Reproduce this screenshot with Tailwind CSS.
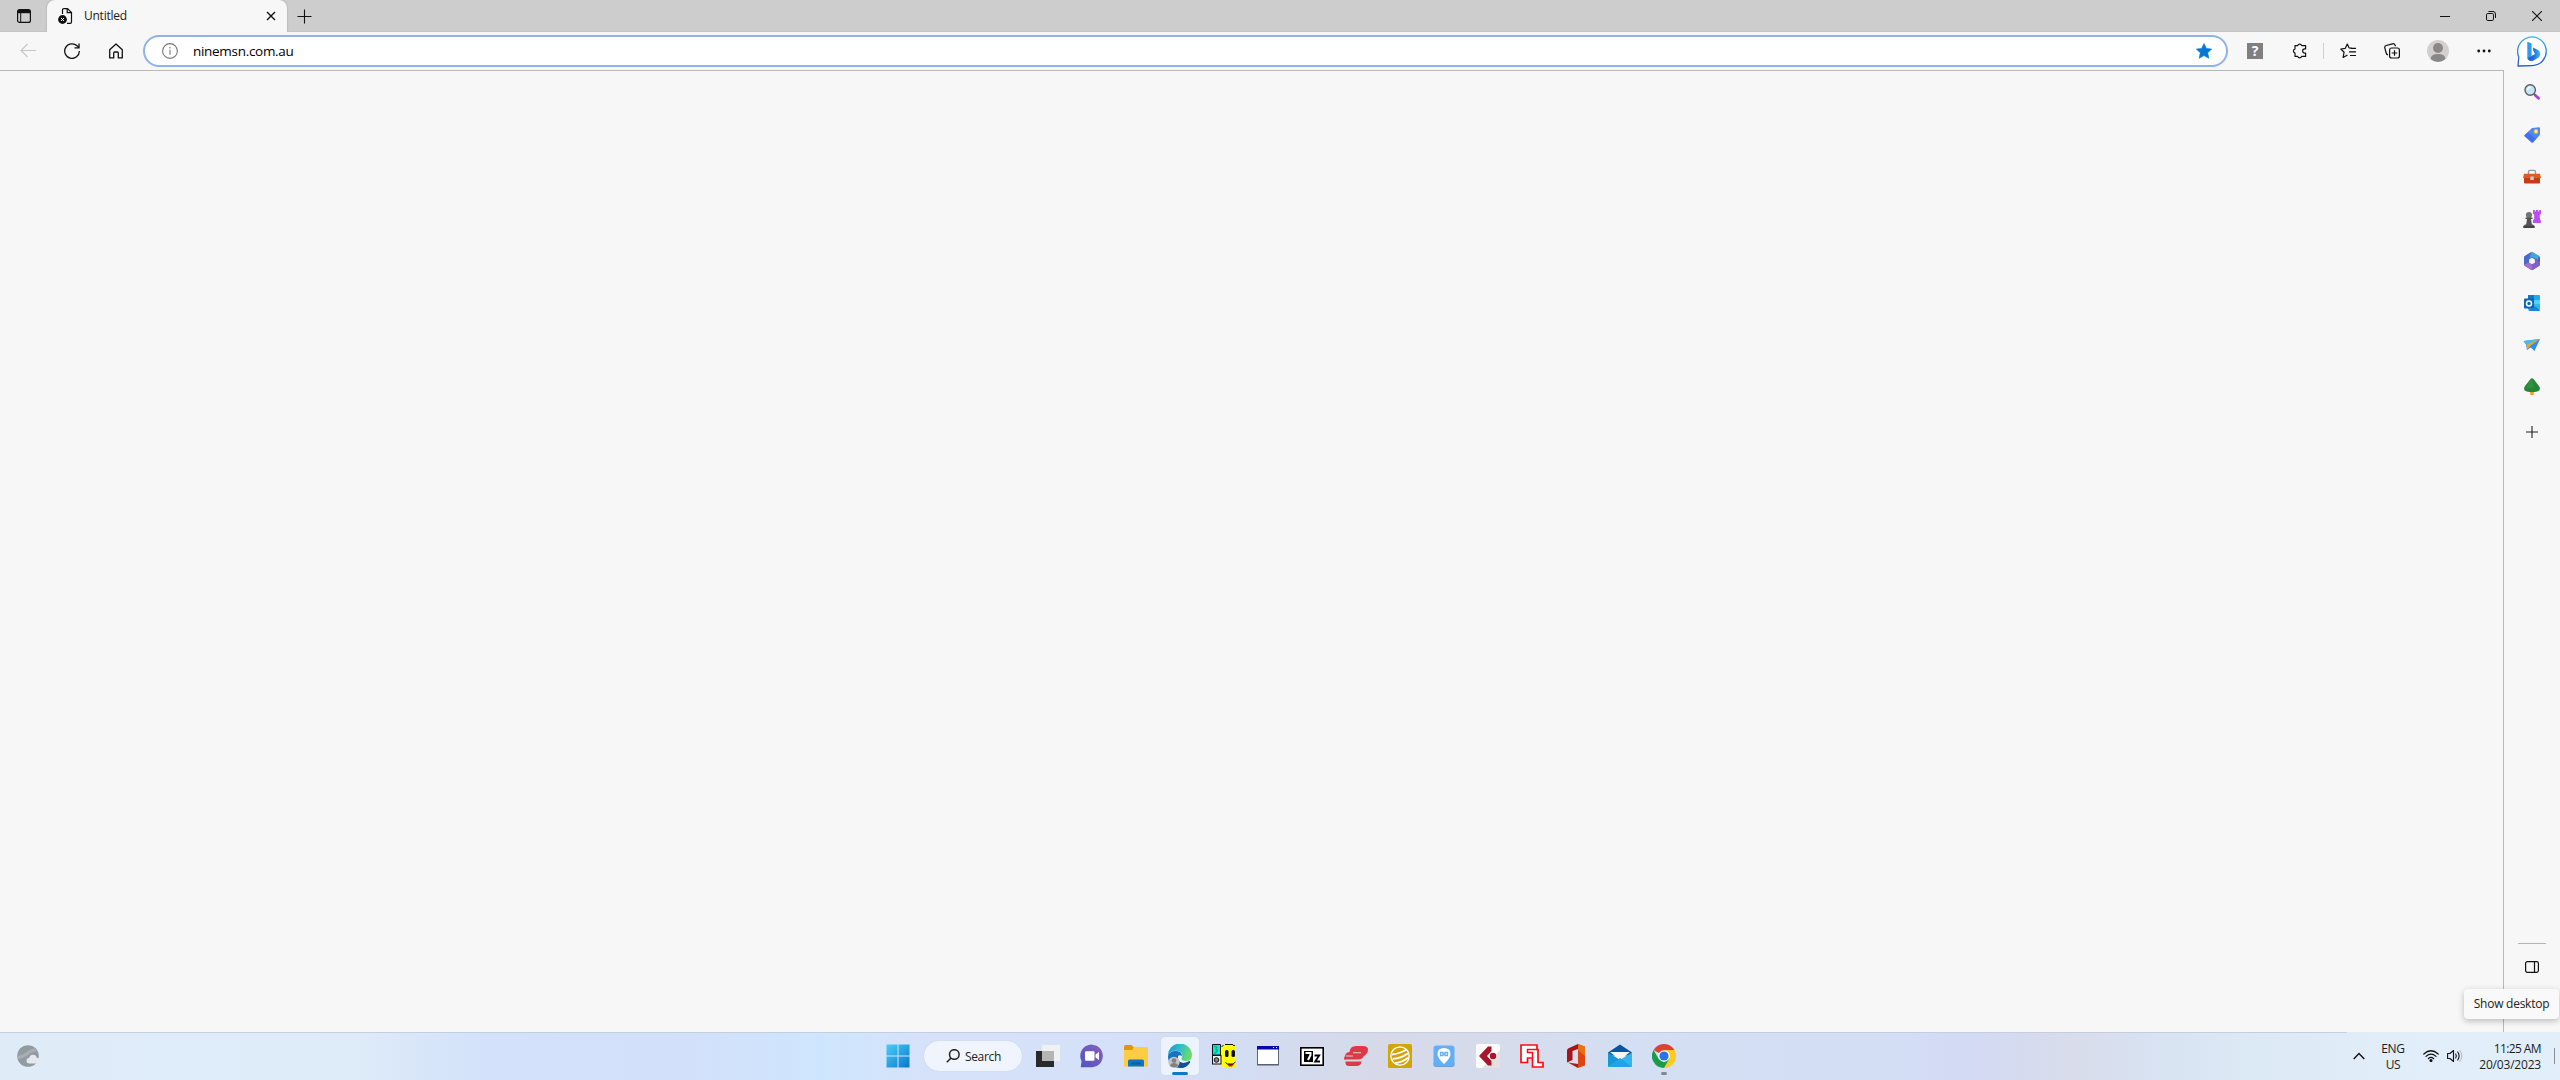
<!DOCTYPE html>
<html lang="en">
<head>
    <meta charset="UTF-8">
    <meta name="viewport" content="width=device-width, initial-scale=1.0">
    <script src="https://cdn.jsdelivr.net/npm/@tailwindcss/browser@4"></script>
    <title>Untitled</title>
</head>
<body class="h-screen flex flex-col overflow-hidden bg-[#f7f7f7] text-[#1a1a1a] font-['Open_Sans','Noto_Sans',sans-serif]">

    <!-- tab strip -->
    <div class="h-8 shrink-0 flex bg-[#cdcdcd] shadow-[inset_0_-1px_0_#c4c4c4]">
        <button class="w-[47px] flex items-center pl-[17px]">
            <svg class="size-[14px]" viewBox="0 0 14 14"><rect x=".6" y=".6" width="12.8" height="12.8" rx="2" fill="none" stroke="#111" stroke-width="1.2"/><path d="M1 1h12v3.2H1z" fill="#111"/><path d="M3.7 4v9" stroke="#111" stroke-width="1"/></svg>
        </button>
        <div class="w-[240px] h-8 flex items-center bg-[#f7f7f7] rounded-t-lg pl-[11px] pr-[11px] relative z-10 shadow-[0_0_2px_#999] [clip-path:inset(0_-3px_0_-3px)]">
            <svg class="w-[15px] h-4" viewBox="0 0 15 16"><path d="M4.5 6V2q0-1.400 1.400-1.400H9.500l4 4V14q0 1.400-1.400 1.400H9" fill="none" stroke="#111" stroke-width="1.200"/><path d="M9.200.7v4h4" fill="none" stroke="#111" stroke-width="1.200"/><circle cx="4.500" cy="11.500" r="4.400" fill="#111"/><path d="M3 10l3 3M6 10l-3 3" stroke="#fff" stroke-width="1"/></svg>
            <span class="ml-[11px] text-xs tracking-[-0.25px]">Untitled</span>
            <svg class="ml-auto size-[10px]" viewBox="0 0 10 10"><path d="M1 1l8 8M9 1L1 9" stroke="#111" stroke-width="1.4"/></svg>
        </div>
        <button class="ml-[10px]"><svg class="size-[15px]" viewBox="0 0 15 15"><path d="M7.500.5v14M.5 7.500h14" stroke="#111" stroke-width="1.1"/></svg></button>
        <div class="ml-auto flex">
            <button class="w-[46px] flex items-center justify-center"><svg class="size-[10px]" viewBox="0 0 10 10"><path d="M0 5.500h10" stroke="#111"/></svg></button>
            <button class="w-[46px] flex items-center justify-center"><svg class="size-[10px]" viewBox="0 0 10 10" fill="none" stroke="#111"><rect x=".5" y="2.500" width="7" height="7" rx="1.300"/><path d="M2.500.5h4.500q2.500 0 2.500 2.500V7"/></svg></button>
            <button class="w-[46px] flex items-center justify-center"><svg class="size-[10px]" viewBox="0 0 10 10"><path d="M0 0l10 10M10 0L0 10" stroke="#111" stroke-width="1.1"/></svg></button>
        </div>
    </div>

    <!-- toolbar -->
    <div class="h-[38px] shrink-0 flex items-center">
        <svg class="ml-5 size-4 shrink-0" viewBox="0 0 16 16" fill="none" stroke="#c6c6c6" stroke-width="1.1"><path d="M16 7.500H1M7.500 1L1 7.500 7.500 14"/></svg>
        <svg class="ml-7 size-4 shrink-0" viewBox="0 0 16 16" fill="none" stroke="#111" stroke-width="1.3"><path d="M15.300 8A7.300 7.300 0 1 1 13 2.800l2 1.800"/><path d="M15 .5v4.300h-4.500"/></svg>
        <svg class="ml-7 size-4 shrink-0" viewBox="0 0 16 16" fill="none" stroke="#111" stroke-width="1.3" stroke-linejoin="round"><path d="M1.700 6.700L8 1l6.300 5.700v8.200h-4V10q0-1-1-1H6.700q-1 0-1 1v4.900h-4z"/></svg>
        <div class="ml-[19px] w-[2085px] h-8 shrink-0 flex items-center rounded-full border-2 border-[#8fb2ec] bg-white pl-[17px] pr-[14px]">
            <svg class="size-4" viewBox="0 0 16 16" fill="none" stroke="#767676" stroke-width="1.1"><circle cx="8" cy="8" r="7.4"/><path d="M8 6.800v5M8 4v1.400"/></svg>
            <span class="ml-[15px] pt-px text-[13.5px] leading-none text-black tracking-[-0.3px]">ninemsn.com.au</span>
            <svg class="ml-auto size-4" viewBox="0 0 16 16"><path d="M8 .5l2.300 4.900 5.400.7-4 3.700 1.100 5.500L8 12.600l-4.800 2.700 1.100-5.500-4-3.700 5.400-.7z" fill="#0078d4" stroke="#0078d4" stroke-width=".6" stroke-linejoin="round"/></svg>
        </div>
        <div class="ml-[19px] size-4 shrink-0 bg-[#808080] text-white text-[14px] leading-4 font-bold text-center">?</div>
        <svg class="ml-[29px] size-4 shrink-0" viewBox="0 0 16 16" fill="none" stroke="#111" stroke-width="1.2" stroke-linejoin="round"><path d="M3 2.600h2.700a2.100 2.100 0 0 1 4 0h3.900v3.300h-.9a2.100 2.100 0 0 0 0 4.200h.9v3.300H9.700a2.100 2.100 0 0 1-4 0H3v-3.300a2.200 2.200 0 0 1 0-4.200z"/></svg>
        <div class="ml-[15px] w-px h-4 bg-[#cfcfcf]"></div>
        <svg class="ml-4 size-4 shrink-0" viewBox="0 0 16 16" fill="none" stroke="#111" stroke-width="1.2" stroke-linejoin="round"><path d="M12 5.200l-3-.4L7.300 1 5.300 5.300.8 6l3.300 3.200-1 5.300L7.500 12M10.500 5.300H16M9 8.900h7M10 12.500h6"/></svg>
        <svg class="ml-7 size-4 shrink-0" viewBox="0 0 16 16" fill="none" stroke="#111" stroke-width="1.2"><rect x="5.600" y="5" width="9.800" height="10" rx="2"/><path d="M10.500 7.300v5.500M7.700 10h5.500M4 12Q2.500 11.500 2 9.500L.8 4.800Q.4 3 2.200 2.500L8.500.8q1.800-.4 2.500 1.200l.5 1.300"/></svg>
        <svg class="ml-[27px] size-[22px] shrink-0" viewBox="0 0 22 22"><circle cx="11" cy="11" r="11" fill="#d2d0ce"/><circle cx="11" cy="8" r="5" fill="#888"/><path d="M3.500 19q.5-5 7.500-5t7.500 5q-7.500 6-15 0z" fill="#888"/></svg>
        <svg class="ml-7 w-[14px] h-4 shrink-0" viewBox="0 0 14 16" fill="#111"><circle cx="1.700" cy="8" r="1.400"/><circle cx="7" cy="8" r="1.400"/><circle cx="12.300" cy="8" r="1.400"/></svg>
        <svg class="ml-[26px] size-[31px] shrink-0" viewBox="0 0 31 31">
            <defs><linearGradient id="bo" x1="0" y1="0" x2="0" y2="1"><stop stop-color="#36b5f0"/><stop offset="1" stop-color="#2855cf"/></linearGradient><linearGradient id="bb" x1="0" y1="0" x2="1" y2="0"><stop stop-color="#2460d8"/><stop offset=".5" stop-color="#2b6ae0"/><stop offset="1" stop-color="#35c5ee"/></linearGradient></defs>
            <path d="M1 30l.8-9A14.300 14.300 0 1 1 15.300 29.600Z" fill="#fff" stroke="url(#bo)" stroke-width="1.3" stroke-linejoin="round"/>
            <path d="M10.300 5.800l3.500 1.200q.8.300.8 1.200v11.500l-3 4.300q-1.300-.8-1.300-2.300z" fill="#2b9cf2"/><path d="M16 11.500l5 2.600q2.500 1.300 2.300 4.200-.2 1.800-1.700 3.200l-5.500 3.200q-2.200 1-4.300-.5l-1.300-1.900 7.500-4.300-1.800-3.400z" fill="url(#bb)"/>
        </svg>
    </div>

    <!-- page and sidebar -->
    <div class="flex-1 min-h-0 flex relative">
        <main class="flex-1 border-t border-r border-[#b8b8b8]"></main>
        <aside class="w-14 flex flex-col items-center pt-[14px] pb-[59px] gap-[26px] shrink-0">
            <svg class="size-4 shrink-0" viewBox="0 0 16 16"><path d="M11.500 11.500l3 2.800" stroke="#b03be0" stroke-width="2.800" stroke-linecap="round"/><path d="M9.500 9.500l2 2" stroke="#666" stroke-width="2"/><circle cx="6.200" cy="6" r="5.200" fill="#c5e6fa" stroke="#5c5c5c" stroke-width="1.4"/><path d="M3.500 5.500q1-2.500 3-2.500" fill="none" stroke="#fff" stroke-width="1.3"/></svg>
            <svg class="mt-px size-4 shrink-0" viewBox="0 0 16 16"><path d="M8 1l7-.8q1 0 1 1V7q0 1-.8 1.700l-6 6.600q-.8.8-1.600 0L.7 9.500q-.9-.8 0-1.600z" fill="#4f86f8"/><path d="M.6 9l6.800 6.500q.8.600 1.700-.3l3-3.200L4 5.500.8 7.800z" fill="#4165e0" opacity=".7"/><circle cx="12" cy="4.500" r="1.800" fill="#fff" stroke="#f5bd25" stroke-width="1.300"/></svg>
            <svg class="w-[18px] h-4 shrink-0" viewBox="0 0 18 16"><path d="M5.500 5V3q0-1.600 1.500-1.600h4q1.500 0 1.500 1.600v2" fill="none" stroke="#999" stroke-width="1.400"/><rect x="1" y="8" width="16" height="6.500" rx=".8" fill="#c73d13"/><path d="M1 4.800h16l1 4.200H0z" fill="#e25a23"/><rect x="7.300" y="7.500" width="3.500" height="3.600" rx=".6" fill="#ccc"/></svg>
            <svg class="w-[18px] h-[18px] -my-px shrink-0" viewBox="0 0 18 18"><path d="M10 0h1.800v1.500h1V0h2.400v1.500h1V0H18v3.500L16.800 5v3.500l1 2.200V13H10v-2.500l1.200-2V5L10 3.500z" fill="#bb4cf8"/><circle cx="6" cy="5" r="3.100" fill="#747474"/><path d="M2.500 7.500h7V9H8l.8 5 2.700 1.800V18H.5v-2.200L3.200 14 4 9H2.500z" fill="#555"/><path d="M.5 16h11v2H.5z" fill="#444"/></svg>
            <svg class="w-4 h-[18px] -my-px shrink-0" viewBox="0 0 16 18"><path d="M8 .2L15 4q1 .5 1 2v6q0 1.500-1 2l-6 3.700q-1 .5-2 0L1 14q-1-.5-1-2V6q0-1.500 1-2L6.500.5z" fill="#4a5cb8"/><path d="M7 .3q1-.5 2 0L15 4l-1 4-6-3-3 2.500z" fill="#46a5d8"/><path d="M7 .3L5 7.500v3L.3 13Q0 12.500 0 11.500V6q0-1.300 1-2z" fill="#4a6cc8"/><path d="M.2 12.500L5 10.500l3 2.500v5q-.5 0-1-.3L1 14q-.7-.5-.8-1.500z" fill="#a76fd4"/><path d="M8 13l3-2.500V7l5 3v2q0 1.500-1 2l-6 3.700q-.5.3-1 .3z" fill="#7e62c8"/><path d="M8 5.800l2.900 1.600v3.300L8 12.300l-2.900-1.600V7.400z" fill="#f7f7f7"/></svg>
            <svg class="w-4 h-4 shrink-0" viewBox="0 0 16 16"><rect x="4" y="0" width="12" height="15" rx="1" fill="#29a7e8"/><path d="M4 0h6v5H4z" fill="#0f78cc"/><path d="M10 5h6v5h-6z" fill="#50d2fa"/><path d="M4 16l12-7v6q0 1-1 1z" fill="#1586d8"/><path d="M9 9l7 6.500V9z" fill="#35b8f1"/><rect x="0" y="3.500" width="10" height="10" rx="1" fill="#0b66bb"/><circle cx="5" cy="8.500" r="2.500" fill="none" stroke="#fff" stroke-width="1.500"/></svg>
            <svg class="w-[18px] h-4 shrink-0" viewBox="0 0 18 16"><path d="M.5 4L17 2l-5.500 12-3.700-3.500L4 13 3 7.500z" fill="#2e8fed"/><path d="M.5 4L17 2 3.500 8z" fill="#4eb8ee"/><path d="M17 2L3.500 7.500 4.500 13 7 9z" fill="#e9a728"/></svg>
            <svg class="w-4 h-[18px] -my-px shrink-0" viewBox="0 0 16 18"><path d="M6.200 12h3.600v4.500q-1.800 1.500-3.600 0z" fill="#ef9e1d"/><path d="M8 .2q1.300 0 2.500 2l4.800 6.300q2 4-2 5Q8 14.500 2.700 13.500q-4-1-2-5l4.800-6.300Q6.700.2 8 .2z" fill="#258637"/><path d="M8 .5q-2 1.500-3.500 5L2 10q5 1 8-1z" fill="#39994a" opacity=".6"/></svg>
            <svg class="mt-[5px] size-3 shrink-0" viewBox="0 0 12 12"><path d="M6 0v12M0 6h12" stroke="#222" stroke-width="1.1"/></svg>
            <div class="mt-auto w-7 h-px bg-[#b5b5b5] shrink-0 -mb-[9px]"></div>
            <svg class="w-[14px] h-3 shrink-0" viewBox="0 0 14 12" fill="none" stroke="#111" stroke-width="1.2"><rect x=".6" y=".6" width="12.800" height="10.800" rx="1.800"/><path d="M9.500 .6v10.800"/></svg>
        </aside>
        <div class="absolute right-px bottom-[13px] w-[95px] h-[30px] flex items-center justify-center rounded bg-[#f9f9f9] shadow-[0_2px_6px_rgba(0,0,0,0.25)] text-xs leading-none whitespace-nowrap tracking-[-0.25px] text-[#222]">Show desktop</div>
    </div>

    <!-- taskbar -->
    <div class="h-12 shrink-0 flex items-center relative bg-[linear-gradient(90deg,#dfecf8_0%,#deebf9_14%,#d3e1fa_19%,#d3e0fa_27%,#cee6fd_32%,#d6e2f9_36%,#d5e1f8_43%,#d2ddf4_48%,#d7d9e8_54%,#d6dcec_59%,#d4dff3_64%,#d3def5_74%,#d3daf3_77%,#d8dceb_81%,#d8e2f2_84%,#dceaf5_88%,#e1edf9_93%,#e2eefa_100%)]">
        <div class="absolute top-0 left-0 w-[2347px] h-px bg-[#c5cee0]"></div>
        <svg class="ml-4 size-6" viewBox="0 0 24 24"><circle cx="12" cy="12" r="10.800" fill="#929ba2"/><path d="M2 12q7-2 10-5 4-3 7-2.500l2 3q-6 0-9 3.500-4 3-10 4z" fill="#a9aeb1"/><path d="M13.500 19.500q-3 0-3-2.700 0-2.500 2.700-2.700.7-3.300 4-3.300 3 0 3.600 3 3 .3 3 2.900-.2 2.800-3.300 2.800z" fill="#e6e8ed"/></svg>

        <div class="absolute left-[876px] top-0 h-12 flex items-center">
            <button class="w-[43px] mr-px flex justify-center">
                <svg class="size-6" viewBox="0 0 24 24"><defs><linearGradient id="w" x1="0" y1="0" x2="1" y2="1"><stop stop-color="#4bcdf5"/><stop offset="1" stop-color="#0877ce"/></linearGradient></defs><path d="M.5.5h11v11H.5zM12.500.5h11v11h-11zM.5 12.500h11v11H.5zM12.500 12.500h11v11h-11z" fill="url(#w)"/></svg>
            </button>
            <div class="mx-1 w-[98px] h-[30px] rounded-full bg-[#f0f5fd] shadow-[0_0_1px_#b8c3d8] flex items-center pl-[22px]">
                <svg class="size-[14px]" viewBox="0 0 14 14" fill="none" stroke="#222" stroke-width="1.5"><circle cx="8.300" cy="5.500" r="4.800"/><path d="M5 9L.8 13.300"/></svg>
                <span class="ml-[5px] pt-[2px] text-xs leading-none tracking-[-0.35px] text-[#222]">Search</span>
            </div>
            <button class="w-11 flex justify-center"><svg class="size-6" viewBox="0 0 24 24"><rect x="6" y="1" width="18" height="16" fill="#f1f1f1"/><rect y="7" width="18" height="16" fill="#292929"/><rect x="6" y="7" width="12" height="10" fill="#b5b5b5"/></svg></button>
            <button class="w-11 flex justify-center"><svg class="size-6" viewBox="0 0 24 24"><defs><linearGradient id="t" x1="1" y1="0" x2="0" y2="1"><stop stop-color="#8a60b8"/><stop offset="1" stop-color="#4f55c4"/></linearGradient></defs><path d="M.7 23.300l.9-6A11.300 11.300 0 1 1 12 23.200z" fill="url(#t)"/><rect x="5" y="7.300" width="9.500" height="9.500" rx="1" fill="#fff"/><path d="M15.500 10.500l3.500-2.500v8l-3.500-2.500z" fill="#fff"/></svg></button>
            <button class="w-11 flex justify-center"><svg class="size-6" viewBox="0 0 24 24"><path d="M0 2.500Q0 1 1.500 1h6L10 3.500V9H0z" fill="#d99b08"/><path d="M0 6h8l2.500-3H23q1 0 1 1v18.500H0z" fill="#fecb45"/><path d="M4 22.500V17q0-1.500 1.500-1.500h13Q20 15.500 20 17v5.500z" fill="#0f76c5"/><path d="M8 18.500h8q1 0 1 1v1H7v-1q0-1 1-1z" fill="#0a5ca3"/></svg></button>
            <button class="w-11 h-12 flex justify-center items-center relative">
                <span class="absolute left-[3px] top-[5px] w-[38px] h-[38px] rounded bg-[#edf3fc] shadow-[0_0_1px_#b8c3d8]"></span>
                <span class="absolute left-[14px] bottom-[5px] w-4 h-[3px] rounded-full bg-[#0f78c9]"></span>
                <svg class="size-6 relative" viewBox="0 0 24 24"><defs><linearGradient id="e" x1="0" y1="0" x2="1" y2=".3"><stop stop-color="#1994d6"/><stop offset=".55" stop-color="#31bfc6"/><stop offset="1" stop-color="#69da6a"/></linearGradient></defs><path d="M0 12A12 12 0 0 1 24 11q0 6-6 6-4.500 0-4.500-2.500Q16 8.500 10 7 2 6 0 12z" fill="url(#e)"/><path d="M0 12Q2 6.500 8.500 7q5.500.5 5.500 5-2.500-1.500-4 0-1.500 4 2 6 4 2.500 9.500-1 1 .2.500 1.500-3.500 5.500-10 5.500Q0 23.500 0 12z" fill="#1673c0"/><path d="M10 12q-1.500 4 2 6 4 2.500 9.500-1 1 .2.500 1.500-3.500 5.500-10 5.500-7-4-4-10 .5-1.500 2-2z" fill="#164f99"/><circle cx="6" cy="18.300" r="5.600" fill="#c3c3c3"/><circle cx="6" cy="16.600" r="2.300" fill="#818181"/><path d="M2 21.700q.5-2.700 4-2.700t4 2.700q-4 3-8 0z" fill="#818181"/></svg>
            </button>
            <button class="w-11 flex justify-center"><svg class="size-6" viewBox="0 0 24 24"><path d="M13 0h8v1h2v1h1v22H12l-3-3V4z" fill="#ff0"/><path d="M13 .5h8M21 1.500h2M9.500 3l2-2" stroke="#111"/><path d="M.5.500H8.500v10.500H.5z" fill="#00ebe3" stroke="#111"/><path d="M2 2h1v1h2v1H4v2h2M6 7H4v2H2" stroke="#1aa353" fill="none"/><rect x=".5" y="11.500" width="8.500" height="8.500" fill="#eee" stroke="#111"/><circle cx="4.500" cy="16" r="2.300" fill="#888" stroke="#111"/><rect x="13" y="6" width="3.500" height="7" rx="1.500" fill="#111"/><rect x="19.500" y="6" width="3.500" height="7" rx="1.500" fill="#111"/><path d="M15 20h7l-2 2.500h-3z" fill="#e01515"/><path d="M13.500 18.500l2 1.500h5.500l2.500-2" fill="none" stroke="#111"/></svg></button>
            <button class="w-11 flex justify-center"><svg class="size-6" viewBox="0 0 24 24"><rect x="1.500" y="2.500" width="21" height="18" fill="#fff" stroke="#5e667d"/><path d="M1 2h22v3.500H1z" fill="#0909a9"/><path d="M17 3.500h1M20 3.500h1" stroke="#fff"/><path d="M1 21h22" stroke="#555b68"/></svg></button>
            <button class="w-11 flex justify-center"><svg class="size-6" viewBox="0 0 24 24"><rect x=".8" y="3.800" width="22.400" height="17.400" fill="#fff" stroke="#000" stroke-width="1.600"/><path d="M4 7h9v11H4z" fill="#000"/><path d="M5.500 9h5v2L8 16" fill="none" stroke="#fff" stroke-width="2"/><path d="M14.500 11.500h4.700l-4 6h4.800" fill="none" stroke="#000" stroke-width="1.800"/></svg></button>
            <button class="w-11 flex justify-center"><svg class="size-6" viewBox="0 0 24 24"><path d="M5.500 8Q6 2 12 2h7q5 0 5 3.500 0 4.500-5 7H1Q1 8.500 5.500 8zM0 15q0-3 3-4.500h17Q19.500 15 15 15.500H3Q0 16 0 15zM1.500 17.500h16q-.5 4.500-5 4.500H5q-4 0-3.500-4.500z" fill="#df3944"/><path d="M9 8.700h8M1 16.500h16M2 12h7" stroke="#d3d8e8" stroke-width="1.1"/></svg></button>
            <button class="w-11 flex justify-center"><svg class="size-6" viewBox="0 0 24 24"><rect width="24" height="24" rx="1.500" fill="#d1a507"/><circle cx="12" cy="12" r="9.200" fill="none" stroke="#fff" stroke-width="1.300"/><path d="M4 10.500Q11 10 18.500 5.500M4.500 15Q13 14.500 20.500 9M7 19q6 0 13.500-5.500" fill="none" stroke="#fff" stroke-width="2"/></svg></button>
            <button class="w-11 flex justify-center"><svg class="size-6" viewBox="0 0 24 24"><rect x="1.500" y="1.500" width="21" height="21" rx="3" fill="#62aff6"/><path d="M1.500 18q0 4.500 3 4.500h15q3 0 3-4.500v2q0 3-3 3h-15q-3 0-3-3z" fill="#3778c5"/><path d="M12 4q6.500 0 6.500 6 0 4-6.500 10-6.500-6-6.500-10 0-6 6.500-6z" fill="#fff"/><path d="M8.500 8.500h2.500v3H8.500zM13 8.500h2.500v3H13zM11 10h2" fill="none" stroke="#62aff6" stroke-width="1.300"/></svg></button>
            <button class="w-11 flex justify-center"><svg class="size-6" viewBox="0 0 24 24"><rect width="24" height="24" rx="2" fill="#fcfcfc"/><path d="M24 6v16q0 2-2 2H6z" fill="#e2e1e0"/><path d="M12 2.500h3.500V7L11 12l4.500 5v4.500H12L3 12z" fill="#a5152b"/><circle cx="17" cy="12" r="3.200" fill="#a5152b"/></svg></button>
            <button class="w-11 flex justify-center"><svg class="size-6" viewBox="0 0 24 24"><path d="M1 1h16v4.500h1V18.500h5V23H12.500v-9H7.500v4.500H1z" fill="#fff" stroke="#fa1010" stroke-width="1.700"/><path d="M17 5.500H7.500V8.500H12.500V14" fill="none" stroke="#fa1010" stroke-width="1.500"/></svg></button>
            <button class="w-11 flex justify-center"><svg class="size-6" viewBox="0 0 24 24"><path d="M14 0l7 2.500v19L14 24z" fill="#dd4412"/><path d="M14 0v5L8.500 7v9L3 18.500V6.500q0-1.500 1.500-2.300z" fill="#a61519"/><path d="M4 18.500l10 1.500v4z" fill="#b2171b"/><path d="M14 0l7 2.500V12l-7-6z" fill="#ef8a14" opacity=".65"/></svg></button>
            <button class="w-11 flex justify-center"><svg class="size-6" viewBox="0 0 24 24"><path d="M0 8.500L12 .5l12 8-2 3H2z" fill="#08569f"/><path d="M2 8h20l-10 8z" fill="#f5f5f5"/><path d="M0 8.500l12 7.500L0 23z" fill="#1796d9"/><path d="M24 8.500L12 16l12 7z" fill="#34b5ef"/><path d="M0 23l12-9 12 9z" fill="#21a3e5"/></svg></button>
            <button class="w-11 h-12 flex justify-center items-center relative">
                <svg class="size-6" viewBox="0 0 24 24"><path d="M12 12L1.600 6A12 12 0 0 1 22.400 6z" fill="#dc4335"/><path d="M12 6h10.400A12 12 0 0 1 12 24l5.200-9z" fill="#fbcb20"/><path d="M12 24A12 12 0 0 1 1.600 6L6.800 15l5.200 3 5.200-3z" fill="#1b9c4b"/><circle cx="12" cy="12" r="5.800" fill="#fff"/><circle cx="12" cy="12" r="4.600" fill="#2d72e8"/></svg>
                <span class="absolute left-[19px] bottom-[5px] w-[6px] h-[3px] rounded-full bg-[#81858e]"></span>
            </button>
        </div>

        <div class="ml-auto flex items-center text-xs leading-4 text-[#1d1d1d]">
            <svg class="w-3 h-2" viewBox="0 0 12 8"><path d="M.7 7L6 1.500 11.300 7" fill="none" stroke="#111" stroke-width="1.4"/></svg>
            <div class="ml-[14px] pt-px w-7 text-center tracking-[-0.3px]">ENG<br>US</div>
            <svg class="ml-4 w-4 h-4" viewBox="0 0 16 16" fill="none" stroke="#111" stroke-width="1.2" stroke-linecap="round"><path d="M.8 6q7.200-6.500 14.400 0M3 8.400q5-4.500 10 0M5.300 10.700q2.700-2.500 5.400 0"/><circle cx="8" cy="12.500" r="1" fill="#111"/></svg>
            <svg class="ml-2 w-4 h-4" viewBox="0 0 16 16" fill="none" stroke="#111" stroke-width="1.1" stroke-linecap="round" stroke-linejoin="round"><path d="M.6 5.500H3L6.500 2.500v11L3 10.500H.6zM8.700 6q1.300 2 0 4M10.700 4q2.800 4 0 8"/><path d="M12.800 2.500q4 5.500 0 11" stroke="#b9bdc9"/></svg>
            <div class="w-[78px] pt-px text-right whitespace-nowrap"><span class="tracking-[-0.6px]">11:25 AM</span><br><span class="tracking-[-0.2px]">20/03/2023</span></div>
            <div class="ml-[13px] mr-[5px] w-px h-4 bg-[#8b8f95]"></div>
        </div>
    </div>
</body>
</html>
